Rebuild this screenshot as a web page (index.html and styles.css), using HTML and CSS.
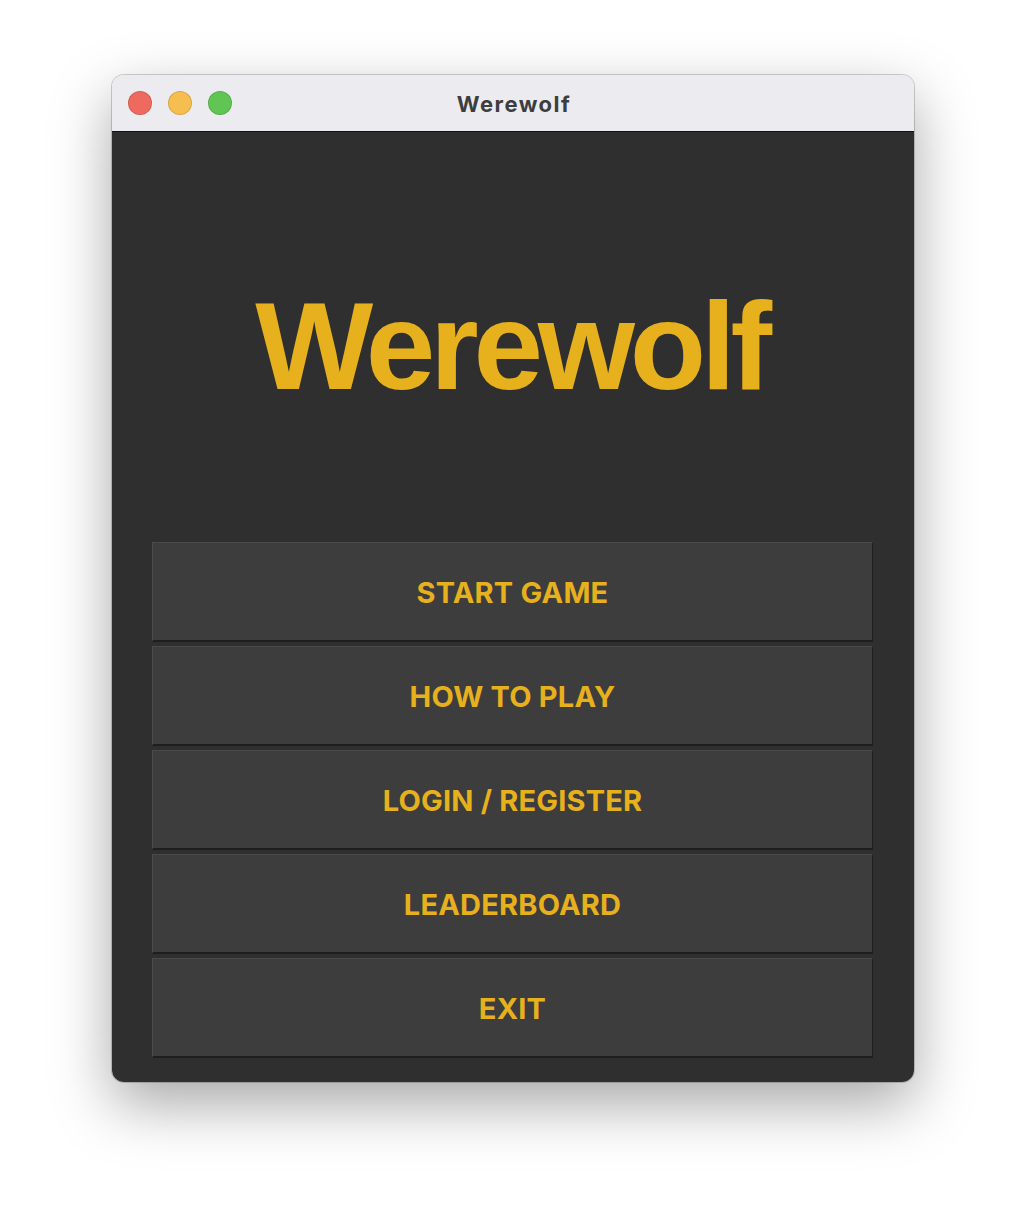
FILE: index.html
```html
<!DOCTYPE html>
<html lang="en">
<head>
<meta charset="utf-8">
<title>Werewolf</title>
<link rel="stylesheet" href="styles.css">
</head>
<body>
<div class="window">
  <header class="titlebar">
    <div class="lights">
      <span class="light red"></span>
      <span class="light yellow"></span>
      <span class="light green"></span>
    </div>
    <div class="title">Werewolf</div>
  </header>
  <main class="content">
    <div class="hero"><h1 class="logo">Werewolf</h1></div>
    <nav class="menu">
      <button class="menu-btn">START GAME</button>
      <button class="menu-btn">HOW TO PLAY</button>
      <button class="menu-btn">LOGIN / REGISTER</button>
      <button class="menu-btn">LEADERBOARD</button>
      <button class="menu-btn">EXIT</button>
    </nav>
  </main>
</div>
</body>
</html>
```
FILE: styles.css
```css
html, body {
  margin: 0;
  padding: 0;
}
body {
  background: #ffffff;
  font-family: Inter, "Liberation Sans", sans-serif;
  display: flex;
  justify-content: center;
  padding-top: 75px;
  height: 1230px;
  box-sizing: border-box;
}
.window {
  width: 802px;
  height: 1007px;
  border-radius: 12px;
  overflow: hidden;
  display: flex;
  flex-direction: column;
  box-shadow: 0 0 0 1px rgba(0,0,0,0.18), 0 22px 60px rgba(0,0,0,0.35);
}
.titlebar {
  height: 56px;
  background: #ecebf0;
  border-bottom: 1px solid #111;
  position: relative;
  display: flex;
  align-items: center;
  justify-content: center;
  flex-shrink: 0;
}
.lights {
  position: absolute;
  left: 16px;
  top: 16px;
  display: flex;
  gap: 16px;
}
.light {
  width: 22px;
  height: 22px;
  border-radius: 50%;
  border: 1px solid rgba(0,0,0,0.12);
}
.red { background: #ee6a5f; }
.yellow { background: #f6be4f; }
.green { background: #61c554; }
.title {
  font-size: 22px;
  font-weight: 700;
  letter-spacing: 1.5px;
  color: #3d3d40;
  margin-top: 1px;
  margin-right: -2px;
}
.content {
  flex: 1;
  background: #2f2f2f;
  padding: 0 41px 24px 40px;
  display: flex;
  flex-direction: column;
}
.hero {
  height: 410px;
  display: flex;
  align-items: center;
  justify-content: center;
}
.logo {
  margin: 0 3px 0 0;
  font-family: "Liberation Sans", Arial, sans-serif;
  font-size: 125px;
  font-weight: 700;
  color: #e6b11d;
  letter-spacing: -5.2px;
  padding-top: 16px;
}
.menu {
  display: flex;
  flex-direction: column;
  gap: 4px;
}
.menu-btn {
  height: 100px;
  background: #3d3d3d;
  border-style: solid;
  border-width: 1px 1px 2px 1px;
  border-color: #4b4b4b #1f1f1f #1e1e1e #4b4b4b;
  color: #e6b11d;
  font-family: Inter, "Liberation Sans", sans-serif;
  font-size: 29px;
  font-weight: 700;
  letter-spacing: 0.2px;
  padding: 2px 0 0;
}
```
